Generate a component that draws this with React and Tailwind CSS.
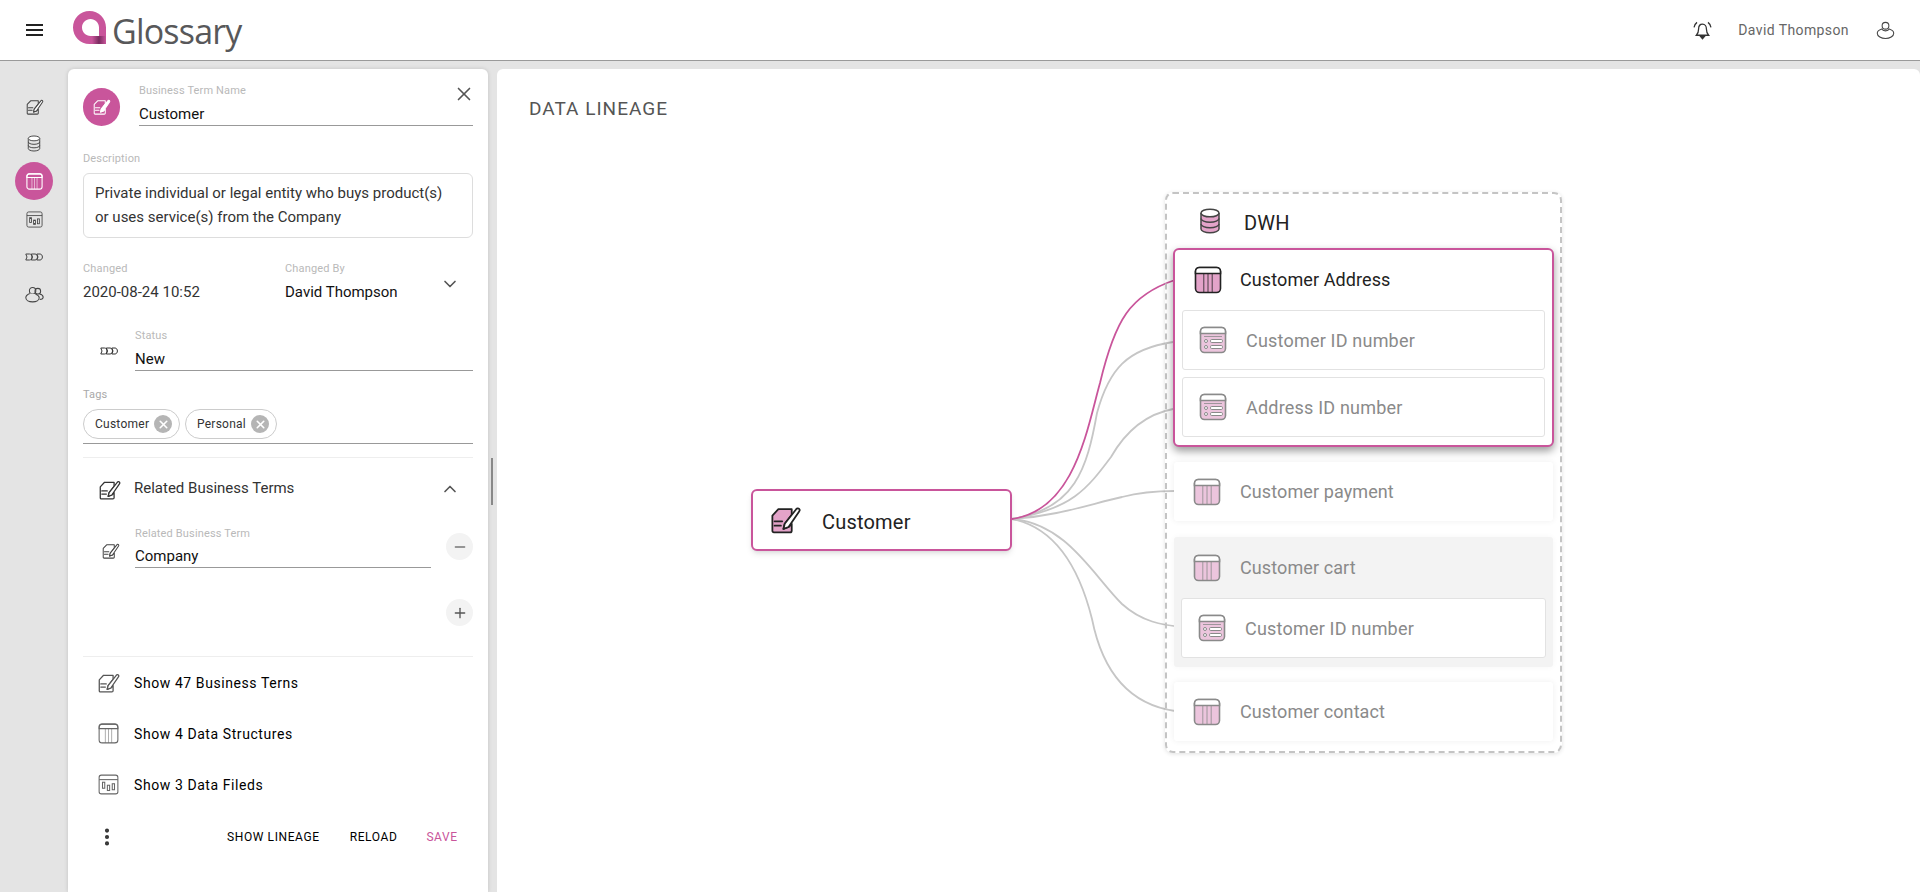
import React from 'react';
import { X, ChevronDown, ChevronUp, Minus, Plus, EllipsisVertical } from 'lucide-react';

function NoteIcon({ className = '', fill = 'none', stroke = 'currentColor' }) {
  return (
    <svg viewBox="0 0 24 22" className={className} fill="none" stroke={stroke} strokeWidth="1.4" strokeLinejoin="round" strokeLinecap="round">
      <path d="M6 2.5H16.5V7L11 14L10 18L14 16.5L16.5 14V19.5C16.5 20.2 16 20.8 15.2 20.8H2.5C1.8 20.8 1.3 20.2 1.3 19.5V7.5Z" fill={fill} />
      <path d="M3 12H9M3 15.5H8" />
      <path d="M11 14L20 2.5C20.7 1.7 21.7 1.6 22.3 2.2C22.9 2.8 22.8 3.8 22.2 4.5L14 16.5L10 18Z" fill="#fff" />
    </svg>
  );
}

function DbIcon({ className = '', fill = 'none', stroke = 'currentColor' }) {
  return (
    <svg viewBox="0 0 22 26" className={className} fill="none" stroke={stroke} strokeWidth="1.5">
      <path d="M2 5V21C2 23 6 24.8 11 24.8S20 23 20 21V5" fill={fill} />
      <ellipse cx="11" cy="5" rx="9" ry="3.8" fill="#fff" />
      <path d="M2 10.5C2 12.5 6 14.3 11 14.3S20 12.5 20 10.5M2 16C2 18 6 19.8 11 19.8S20 18 20 16" />
    </svg>
  );
}

function TableIcon({ className = '', fill = 'none', stroke = 'currentColor', sw = 1.6, head = 'none' }) {
  return (
    <svg viewBox="0 0 28 28" className={className} fill="none" stroke={stroke} strokeWidth={sw}>
      <rect x="1.5" y="1.5" width="25" height="25" rx="4" fill={fill} />
      <path d="M1.5 7.5V5.5C1.5 3.3 3.3 1.5 5.5 1.5H22.5C24.7 1.5 26.5 3.3 26.5 5.5V7.5Z" fill={head} />
      <path d="M9.8 7.5V26.5M14 7.5V26.5M18.2 7.5V26.5" strokeWidth={sw * 0.5} />
    </svg>
  );
}

function BarsIcon({ className = '', stroke = 'currentColor' }) {
  return (
    <svg viewBox="0 0 28 28" className={className} fill="none" stroke={stroke} strokeWidth="1.4">
      <rect x="1.5" y="1.5" width="25" height="25" rx="3" />
      <path d="M1.5 7.5H26.5" />
      <rect x="6" y="11" width="3" height="8" />
      <rect x="12.5" y="15" width="3" height="7" />
      <rect x="19" y="13" width="3" height="8" />
    </svg>
  );
}

function FieldIcon({ className = '', fill = '#ecc5dd', stroke = '#8a8a8a' }) {
  return (
    <svg viewBox="0 0 28 28" className={className} fill="none" stroke={stroke} strokeWidth="1.6">
      <rect x="1.5" y="1.5" width="25" height="25" rx="4" fill={fill} />
      <path d="M1.5 7.5V5.5C1.5 3.3 3.3 1.5 5.5 1.5H22.5C24.7 1.5 26.5 3.3 26.5 5.5V7.5Z" fill="#fff" />
      <path d="M5 10.5H23" strokeWidth="0.8" />
      <circle cx="7" cy="15" r="1.5" fill="#fff" strokeWidth="1" />
      <circle cx="7" cy="21" r="1.5" fill="#fff" strokeWidth="1" />
      <rect x="11.5" y="13.5" width="12" height="3" rx="1.2" fill="#fff" strokeWidth="1" />
      <rect x="11.5" y="19.5" width="12" height="3" rx="1.2" fill="#fff" strokeWidth="1" />
    </svg>
  );
}

function ChainIcon({ className = '' }) {
  return (
    <svg viewBox="0 0 18 8" className={className} fill="none" stroke="currentColor" strokeWidth="1">
      <path d="M.8 1H4.5C6 1 7 2.4 7 4S6 7 4.5 7H.8L2 4Z" />
      <path d="M6.3 1H10C11.5 1 12.5 2.4 12.5 4S11.5 7 10 7H6.3L7.5 4Z" />
      <path d="M11.8 1H15C16.4 1 17.4 2.4 17.4 4S16.4 7 15 7H11.8L13 4Z" />
    </svg>
  );
}

function PeopleIcon({ className = '' }) {
  return (
    <svg viewBox="0 0 20 18" className={className} fill="none" stroke="currentColor" strokeWidth="1.1">
      <circle cx="8" cy="5" r="3.4" />
      <circle cx="13.5" cy="5.5" r="3" />
      <path d="M5 8C2.5 9 .8 10.8.8 12.5C.8 15 4 16.8 8 16.8C12 16.8 15 15 15 12.5C15 11 13 9.3 11 8.5" fill="#e4e4e4" />
      <path d="M15.5 8.5C17.5 9 19.2 10.3 19.2 11.8C19.2 13 18 14 15.5 14.4" />
    </svg>
  );
}

function BellIcon({ className = '' }) {
  return (
    <svg viewBox="0 0 18 18" className={className} fill="none" stroke="currentColor" strokeWidth="1.2">
      <path d="M9 3C6.5 3 5.3 5 5.3 7.5C5.3 10.5 4.5 12 3.2 13.5H14.8C13.5 12 12.7 10.5 12.7 7.5C12.7 5 11.5 3 9 3Z" />
      <path d="M7.3 14.8H10.7L9 16.8Z" fill="currentColor" />
      <path d="M1 6C1.3 4 2.3 2.4 3.8 1.3M17 6C16.7 4 15.7 2.4 14.2 1.3" />
    </svg>
  );
}

function UserIcon({ className = '' }) {
  return (
    <svg viewBox="0 0 18 18" className={className} fill="none" stroke="currentColor" strokeWidth="1">
      <circle cx="9" cy="4.5" r="3.2" />
      <path d="M5.5 7.5C3 8.3 1.2 9.8 1.2 11.5C1.2 14.5 5 16.5 9 16.5S16.8 14.5 16.8 11.5C16.8 9.8 15 8.3 12.5 7.5C11.5 10 6.5 10 5.5 7.5Z" />
    </svg>
  );
}

function Logo() {
  return (
    <svg viewBox="0 0 33 33" className="w-[33px] h-[33px]">
      <defs>
        <linearGradient id="logoFade" x1="0" y1="0" x2="1" y2="0">
          <stop offset="0" stopColor="#c9559b" />
          <stop offset="0.5" stopColor="#7a2c60" />
          <stop offset="1" stopColor="#c9559b" />
        </linearGradient>
      </defs>
      <path fillRule="evenodd" fill="#c9559b" d="M16.5 0C25.6 0 33 7.4 33 16.5V33H16.5C7.4 33 0 25.6 0 16.5S7.4 0 16.5 0ZM17.5 8C12.8 8 9 11.8 9 16.5S12.8 25 17.5 25H26V16.5C26 11.8 22.2 8 17.5 8Z" />
      <rect x="19" y="25" width="14" height="8" fill="url(#logoFade)" />
    </svg>
  );
}

function Label({ children, className = 'text-[#b9b9b9]' }) {
  return <div className={`h-3 text-[11px] leading-3 tracking-[0.15px] ${className}`}>{children}</div>;
}

function Field({ label, value, valueClass = 'h-[24px] mt-[5px]' }) {
  return (
    <div className="flex-1">
      <Label>{label}</Label>
      <div className={`border-b border-[#999] text-[15px] leading-[24px] text-[#111] ${valueClass}`}>{value}</div>
    </div>
  );
}

function Chip({ label, className }) {
  return (
    <div className={`h-[30px] flex items-center justify-between rounded-full border border-[#ccc] pl-[11px] pr-[7px] text-xs text-[#333] tracking-[0.25px] ${className}`}>
      <span>{label}</span>
      <span className="w-[18px] h-[18px] rounded-full bg-[#b5b5b5] flex items-center justify-center">
        <X size={13} strokeWidth={3} className="text-white" />
      </span>
    </div>
  );
}

function ShowRow({ icon, label }) {
  return (
    <div className="h-[51px] flex items-center text-sm text-black tracking-[0.58px]">
      <div className="w-[51px] pl-[15px]">{icon}</div>
      <span>{label}</span>
    </div>
  );
}

function SidePanel() {
  return (
    <div className="w-[420px] shrink-0 bg-white rounded-t-md shadow-[0_0_4px_rgba(0,0,0,0.15)] px-[15px] pt-4 relative">
      <button className="absolute top-[14px] right-[13px] text-[#555]"><X size={22} strokeWidth={1.8} /></button>

      <div className="flex items-end">
        <div className="w-[37px] h-[38px] rounded-full bg-[#c9559b] flex items-center justify-center text-white mr-[19px] shrink-0">
          <NoteIcon className="w-[18px] h-[16px]" fill="#c9559b" />
        </div>
        <Field label="Business Term Name" value="Customer" />
      </div>

      <div className="mt-[27px]"><Label>Description</Label></div>
      <div className="mt-2 h-[65px] rounded-md border border-[#ddd] pl-[11px] pr-5 py-[7px] text-[15px] leading-6 text-[#333]">
        Private individual or legal entity who buys product(s) or uses service(s) from the Company
      </div>

      <div className="mt-[25px] flex relative">
        <div className="w-[202px]">
          <Label>Changed</Label>
          <div className="mt-[5px] h-6 leading-6 text-[15px] text-[#333]">2020-08-24 10:52</div>
        </div>
        <div className="flex-1">
          <Label>Changed By</Label>
          <div className="mt-[5px] h-6 leading-6 text-[15px] text-[#111]">David Thompson</div>
        </div>
        <ChevronDown size={20} className="absolute right-[13px] top-[11px] text-[#555]" />
      </div>

      <div className="mt-[26px] flex items-center">
        <div className="w-[52px] pl-[17px] text-[#333]"><ChainIcon className="w-[18px] h-[8px]" /></div>
        <Field label="Status" value="New" />
      </div>

      <div className="mt-[18px]"><Label className="text-[#a9a9a9]">Tags</Label></div>
      <div className="mt-2 pb-1 border-b border-[#999] flex gap-[5px]">
        <Chip label="Customer" className="w-[97px]" />
        <Chip label="Personal" className="w-[92px]" />
      </div>

      <div className="mt-[13px] border-t border-[#eee]" />

      <div className="h-[60px] flex items-center text-[15px] text-[#333] relative">
        <div className="w-[51px] pl-[16px]"><NoteIcon className="w-[22px] h-[20px] mt-1 text-[#333]" /></div>
        <span>Related Business Terms</span>
        <ChevronUp size={20} className="absolute right-[13px] top-[21px] text-[#555]" />
      </div>

      <div className="mt-[10px] flex">
        <div className="w-[52px] pl-[19px] pt-[15px] text-[#444]"><NoteIcon className="w-[18px] h-[16px]" /></div>
        <div className="w-[296px]"><Field label="Related Business Term" value="Company" valueClass="h-[24px] mt-1" /></div>
        <button className="ml-[15px] mt-[5px] w-[27px] h-[27px] rounded-full bg-[#f3f3f3] flex items-center justify-center text-[#777]"><Minus size={16} /></button>
      </div>

      <div className="mt-[31px] flex justify-end">
        <button className="w-[27px] h-[27px] rounded-full bg-[#f3f3f3] flex items-center justify-center text-[#555]"><Plus size={16} /></button>
      </div>

      <div className="mt-[30px] border-t border-[#eee]" />

      <ShowRow icon={<NoteIcon className="w-[22px] h-[20px] text-[#555]" />} label="Show 47 Business Terns" />
      <ShowRow icon={<TableIcon className="w-[21px] h-[21px] text-[#666]" sw={1.4} />} label="Show 4 Data Structures" />
      <ShowRow icon={<BarsIcon className="w-[21px] h-[21px] text-[#666]" />} label="Show 3 Data Fileds" />

      <div className="mt-[3px] h-[48px] flex items-center text-xs tracking-[0.6px]">
        <EllipsisVertical size={22} strokeWidth={2.5} className="ml-[13px] text-[#333]" />
        <span className="ml-[109px] text-black">SHOW LINEAGE</span>
        <span className="ml-[30px] text-black">RELOAD</span>
        <span className="ml-[29px] text-[#c9559b]">SAVE</span>
      </div>
    </div>
  );
}

function DiagramLines() {
  const grey = [
    'M515 450C578 440 590 400 600 344C612 300 630 280 676 273',
    'M515 450C575 440 590 420 614 388C630 360 650 345 676 340',
    'M515 450C560 447 590 436 625 428C640 424 655 422 678 422',
    'M515 450C570 455 595 505 625 535C645 553 665 556 686 558',
    'M515 450C565 460 585 510 595 550C605 600 630 635 678 642',
  ];
  return (
    <svg className="absolute inset-0 w-full h-full" fill="none">
      {grey.map((d) => (
        <path key={d} d={d} stroke="#c6c6c6" strokeWidth="1.8" />
      ))}
      <path d="M515 450C578 441 590 360 603 314C618 251 633 226 678 211" stroke="#c9559b" strokeWidth="1.8" />
    </svg>
  );
}

function FieldRow({ label }) {
  return (
    <div className="h-[60px] bg-white border border-[#e2e2e2] rounded-[3px] flex items-center pl-4 text-lg text-[#8a8a8a] tracking-[0.2px]">
      <FieldIcon className="w-[28px] h-[28px] mr-[19px]" />
      <span className="pt-[2px]">{label}</span>
    </div>
  );
}

function TableRow({ label }) {
  return (
    <div className="h-[59px] flex items-center pl-[19px] text-lg text-[#8a8a8a] tracking-[0.1px]">
      <TableIcon className="w-[28px] h-[28px] mr-[19px]" fill="#ecc5dd" stroke="#8a8a8a" head="#fff" />
      <span>{label}</span>
    </div>
  );
}

function Lineage() {
  return (
    <div className="flex-1 bg-white rounded-t-md relative ml-[9px]">
      <h2 className="absolute left-[32px] top-[28px] text-[19px] leading-6 text-[#555] tracking-[1px]">DATA LINEAGE</h2>
      <DiagramLines />

      <div className="absolute left-[254px] top-[420px] w-[261px] h-[62px] bg-white border-2 border-[#c9559b] rounded-md shadow-md flex items-center pl-[17px] text-xl text-[#222] tracking-[0.2px]">
        <NoteIcon className="w-[32px] h-[28px] mr-[20px] text-[#222]" fill="#e3a3c9" />
        <span className="pt-[3px]">Customer</span>
      </div>

      <div className="absolute left-[668px] top-[123px] w-[397px] h-[561px] border-2 border-dashed border-[#c4c4c4] rounded-lg px-[6px] shadow-[0_1px_4px_rgba(0,0,0,0.12)]">
        <div className="h-[54px] flex items-center pl-[26px] text-xl text-[#222] tracking-[0.2px]">
          <DbIcon className="w-[22px] h-[26px] mr-[23px] text-[#444]" fill="#e3a3c9" />
          <span className="pt-1">DWH</span>
        </div>

        <div className="h-[199px] bg-white border-2 border-[#c9559b] rounded-md shadow-[0_4px_8px_rgba(0,0,0,0.4)] px-[7px] relative">
          <div className="h-[60px] flex items-center pl-[12px] text-lg text-[#222] tracking-[0.1px]">
            <TableIcon className="w-[28px] h-[28px] mr-[18px]" fill="#e3a3c9" stroke="#222" head="#fff" />
            <span>Customer Address</span>
          </div>
          <div className="flex flex-col gap-[7px]">
            <FieldRow label="Customer ID number" />
            <FieldRow label="Address ID number" />
          </div>
        </div>

        <div className="mt-[15px] mx-px bg-white rounded-[3px] shadow-[0_0_6px_rgba(0,0,0,0.07)]">
          <TableRow label="Customer payment" />
        </div>

        <div className="mt-4 mx-px h-[130px] bg-[#f3f3f3] rounded-[3px] px-[7px] shadow-[0_0_6px_rgba(0,0,0,0.04)]">
          <div className="h-[61px] flex items-center pl-[12px] text-lg text-[#8a8a8a] tracking-[0.1px]">
            <TableIcon className="w-[28px] h-[28px] mr-[19px]" fill="#ecc5dd" stroke="#8a8a8a" head="#fff" />
            <span className="pt-px">Customer cart</span>
          </div>
          <FieldRow label="Customer ID number" />
        </div>

        <div className="mt-[15px] mx-px bg-white rounded-[3px] shadow-[0_0_6px_rgba(0,0,0,0.07)]">
          <TableRow label="Customer contact" />
        </div>
      </div>
    </div>
  );
}

export default function App() {
  return (
    <div className="h-[892px] overflow-hidden bg-[#e4e4e4] flex flex-col font-['Roboto',sans-serif]">
      {/* Top bar */}
      <header className="h-[61px] shrink-0 bg-white border-b border-[#9a9a9a] flex items-center">
        <div className="ml-[26px] w-[17px] flex flex-col gap-[3px]">
          <span className="h-[2px] bg-[#222]" />
          <span className="h-[2px] bg-[#222]" />
          <span className="h-[2px] bg-[#222]" />
        </div>
        <div className="ml-[30px] mb-[5px]"><Logo /></div>
        <span className="ml-[6px] pt-[2px] font-['Open_Sans',sans-serif] text-[34px] leading-none text-[#58585a] tracking-[-0.8px]">Glossary</span>
        <div className="ml-auto flex items-center text-[#333]">
          <BellIcon className="w-[19px] h-[19px]" />
          <span className="ml-[26px] text-sm text-[#666] tracking-[0.4px]">David Thompson</span>
          <UserIcon className="ml-[27px] mr-[25px] w-[19px] h-[19px] text-[#444]" />
        </div>
      </header>

      <div className="flex-1 flex pt-2 min-h-0">
        {/* Icon rail */}
        <nav className="w-[68px] shrink-0 flex flex-col items-center text-[#444] pt-[19px]">
          <div className="h-[37px] flex items-center justify-center"><NoteIcon className="w-[18px] h-[16px] ml-px" /></div>
          <div className="h-[37px] flex items-center justify-center"><DbIcon className="w-[14px] h-[17px]" /></div>
          <div className="w-[38px] h-[38px] rounded-full bg-[#c9559b] flex items-center justify-center">
            <TableIcon className="w-[17px] h-[17px]" stroke="#fff" sw={1.8} />
          </div>
          <div className="h-[38px] flex items-center justify-center"><BarsIcon className="w-[17px] h-[17px]" /></div>
          <div className="h-[37px] flex items-center justify-center"><ChainIcon className="w-[18px] h-[8px]" /></div>
          <div className="h-[38px] flex items-center justify-center"><PeopleIcon className="w-[19px] h-[17px]" /></div>
        </nav>

        <SidePanel />

        {/* Splitter thumb */}
        <div className="w-0 relative">
          <span className="absolute left-[3px] top-[389px] w-[2px] h-[47px] bg-[#888]" />
        </div>

        <Lineage />
      </div>
    </div>
  );
}
